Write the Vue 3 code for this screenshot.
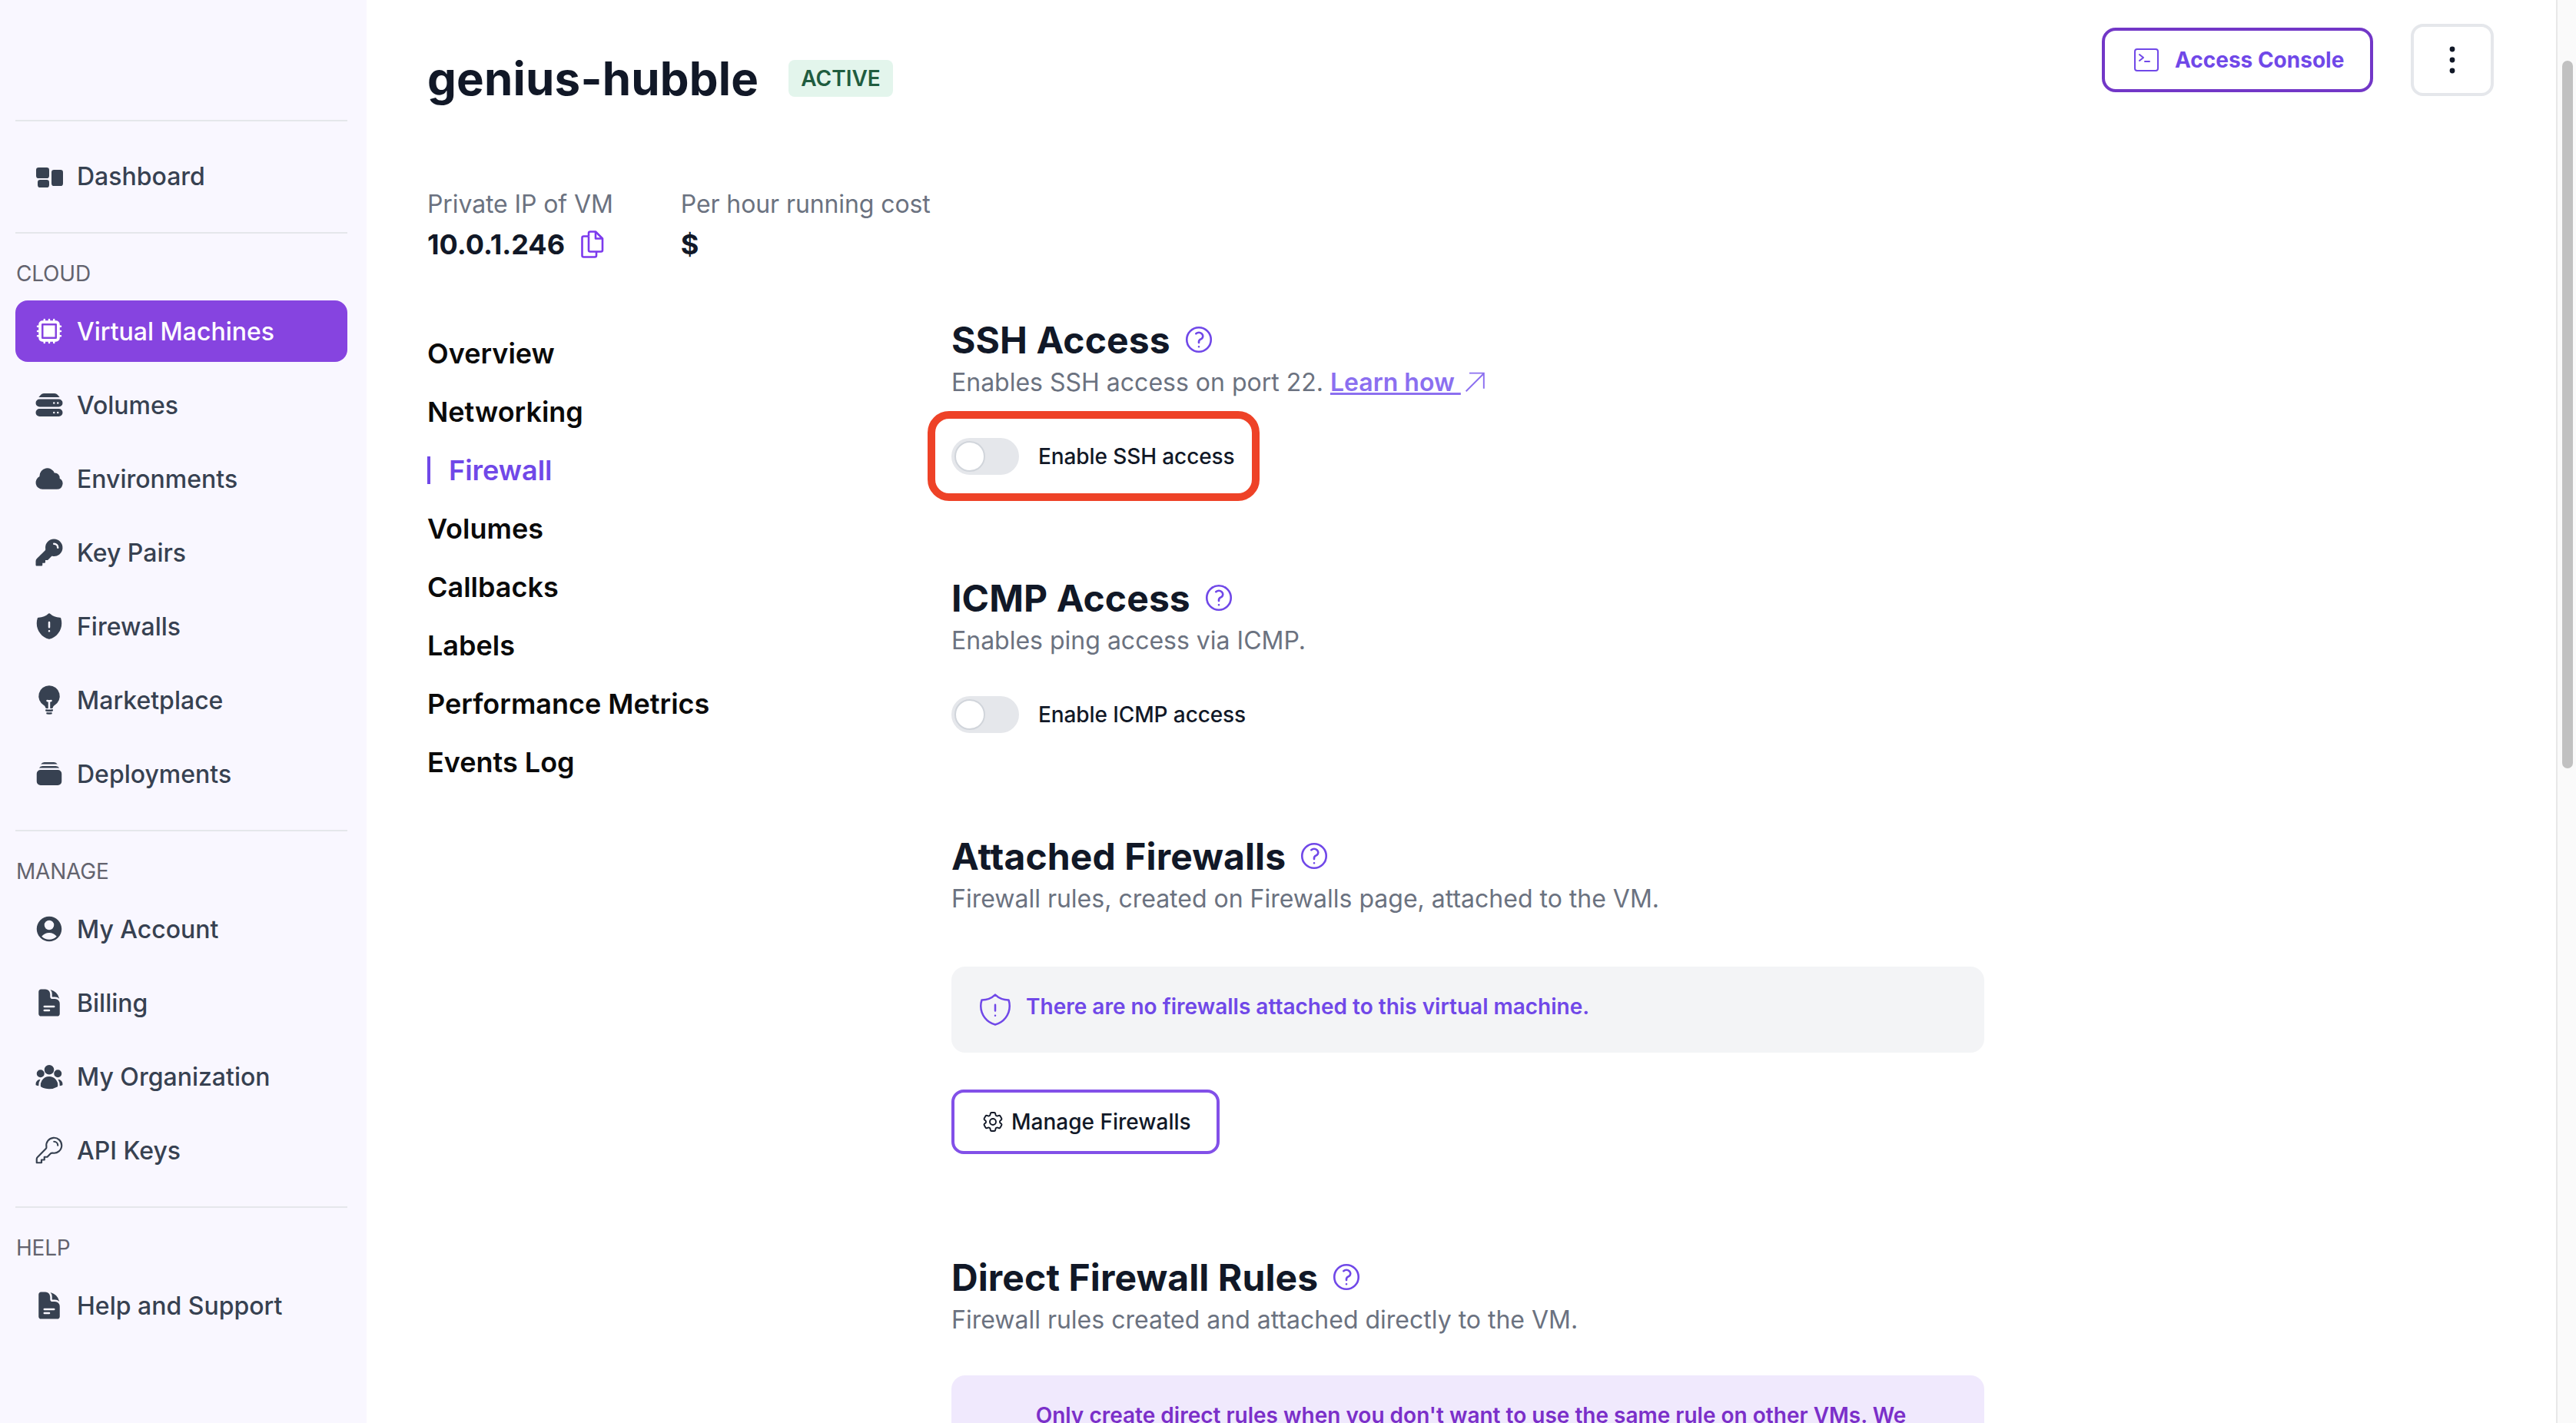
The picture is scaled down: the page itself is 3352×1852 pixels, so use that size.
<script setup>
const groups = [
  { label: null, items: [{ name: 'Dashboard', icon: 'dash' }] },
  {
    label: 'CLOUD',
    items: [
      { name: 'Virtual Machines', icon: 'cpu', active: true },
      { name: 'Volumes', icon: 'server' },
      { name: 'Environments', icon: 'cloud' },
      { name: 'Key Pairs', icon: 'keySolid' },
      { name: 'Firewalls', icon: 'shield' },
      { name: 'Marketplace', icon: 'bulb' },
      { name: 'Deployments', icon: 'stack' }
    ]
  },
  {
    label: 'MANAGE',
    items: [
      { name: 'My Account', icon: 'user' },
      { name: 'Billing', icon: 'doc' },
      { name: 'My Organization', icon: 'team' },
      { name: 'API Keys', icon: 'keyLine' }
    ]
  },
  { label: 'HELP', items: [{ name: 'Help and Support', icon: 'doc' }] }
]
const subNav = ['Overview', 'Networking', 'Firewall', 'Volumes', 'Callbacks', 'Labels', 'Performance Metrics', 'Events Log']
const solid = {
  cloud: ['M4.5 9.75a6 6 0 0 1 11.573-2.226 3.75 3.75 0 0 1 4.133 4.303A4.5 4.5 0 0 1 18 20.25H6.75a5.25 5.25 0 0 1-2.23-10.004 6.072 6.072 0 0 1-.02-.496Z'],
  keySolid: ['M15.75 1.5a6.75 6.75 0 0 0-6.651 7.906c.067.39-.032.717-.221.906l-6.5 6.499a3 3 0 0 0-.878 2.121v2.818c0 .414.336.75.75.75H6a.75.75 0 0 0 .75-.75v-1.5h1.5A.75.75 0 0 0 9 19.5V18h1.5a.75.75 0 0 0 .53-.22l2.658-2.658c.19-.189.517-.288.906-.22A6.75 6.75 0 1 0 15.75 1.5Zm0 3a.75.75 0 0 0 0 1.5A2.25 2.25 0 0 1 18 8.25a.75.75 0 0 0 1.5 0 3.75 3.75 0 0 0-3.75-3.75Z'],
  shield: ['M11.484 2.17a.75.75 0 0 1 1.032 0 11.209 11.209 0 0 0 7.877 3.08.75.75 0 0 1 .722.515 12.74 12.74 0 0 1 .635 3.985c0 5.942-4.064 10.933-9.563 12.348a.749.749 0 0 1-.374 0C6.314 20.683 2.25 15.692 2.25 9.75c0-1.39.223-2.73.635-3.985a.75.75 0 0 1 .722-.516l.143.001c2.996 0 5.718-1.17 7.734-3.08ZM12 8.25a.75.75 0 0 1 .75.75v3.75a.75.75 0 0 1-1.5 0V9a.75.75 0 0 1 .75-.75ZM12 15a.75.75 0 0 0-.75.75v.008c0 .414.336.75.75.75h.008a.75.75 0 0 0 .75-.75v-.008a.75.75 0 0 0-.75-.75H12Z'],
  bulb: ['M12 .75a8.25 8.25 0 0 0-4.135 15.39c.686.398 1.115 1.008 1.134 1.623a.75.75 0 0 0 .577.706c.352.083.71.148 1.074.195.323.041.6-.218.6-.544v-4.661a6.714 6.714 0 0 1-.937-.171.75.75 0 1 1 .374-1.453 5.261 5.261 0 0 0 2.626 0 .75.75 0 1 1 .374 1.452 6.712 6.712 0 0 1-.937.172v4.66c0 .327.277.586.6.545.364-.047.722-.112 1.074-.195a.75.75 0 0 0 .577-.706c.02-.615.448-1.225 1.134-1.623A8.25 8.25 0 0 0 12 .75Z', 'M9.013 19.9a.75.75 0 0 1 .877-.597 11.319 11.319 0 0 0 4.22 0 .75.75 0 1 1 .28 1.473 12.819 12.819 0 0 1-4.78 0 .75.75 0 0 1-.597-.876ZM9.754 22.344a.75.75 0 0 1 .824-.668 13.682 13.682 0 0 0 2.844 0 .75.75 0 1 1 .156 1.492 15.156 15.156 0 0 1-3.156 0 .75.75 0 0 1-.668-.824Z'],
  stack: ['M5.566 4.657A4.505 4.505 0 0 1 6.75 4.5h10.5c.41 0 .806.055 1.183.157A3 3 0 0 0 15.75 3h-7.5a3 3 0 0 0-2.684 1.657ZM2.25 12a3 3 0 0 1 3-3h13.5a3 3 0 0 1 3 3v6a3 3 0 0 1-3 3H5.25a3 3 0 0 1-3-3v-6ZM5.25 7.5c-.41 0-.806.055-1.184.157A3 3 0 0 1 6.75 6h10.5a3 3 0 0 1 2.683 1.657A4.505 4.505 0 0 0 18.75 7.5H5.25Z'],
  user: ['M18.685 19.097A9.723 9.723 0 0 0 21.75 12c0-5.385-4.365-9.75-9.75-9.75S2.25 6.615 2.25 12a9.723 9.723 0 0 0 3.065 7.097A9.716 9.716 0 0 0 12 21.75a9.716 9.716 0 0 0 6.685-2.653Zm-12.54-1.285A7.486 7.486 0 0 1 12 15a7.486 7.486 0 0 1 5.855 2.812A8.224 8.224 0 0 1 12 20.25a8.224 8.224 0 0 1-5.855-2.438ZM15.75 9a3.75 3.75 0 1 1-7.5 0 3.75 3.75 0 0 1 7.5 0Z'],
  doc: ['M5.625 1.5c-1.036 0-1.875.84-1.875 1.875v17.25c0 1.035.84 1.875 1.875 1.875h12.75c1.035 0 1.875-.84 1.875-1.875V12.75A3.75 3.75 0 0 0 16.5 9h-1.875a1.875 1.875 0 0 1-1.875-1.875V5.25A3.75 3.75 0 0 0 9 1.5H5.625ZM7.5 15a.75.75 0 0 1 .75-.75h7.5a.75.75 0 0 1 0 1.5h-7.5A.75.75 0 0 1 7.5 15Zm.75 2.25a.75.75 0 0 0 0 1.5H12a.75.75 0 0 0 0-1.5H8.25Z', 'M12.971 1.816A5.23 5.23 0 0 1 14.25 5.25v1.875c0 .207.168.375.375.375H16.5a5.23 5.23 0 0 1 3.434 1.279 9.768 9.768 0 0 0-6.963-6.963Z'],
  team: ['M8.25 6.75a3.75 3.75 0 1 1 7.5 0 3.75 3.75 0 0 1-7.5 0ZM15.75 9.75a3 3 0 1 1 6 0 3 3 0 0 1-6 0ZM2.25 9.75a3 3 0 1 1 6 0 3 3 0 0 1-6 0ZM6.31 15.117A6.745 6.745 0 0 1 12 12a6.745 6.745 0 0 1 6.709 7.498.75.75 0 0 1-.372.568A12.696 12.696 0 0 1 12 21.75c-2.305 0-4.47-.612-6.337-1.684a.75.75 0 0 1-.372-.568 6.787 6.787 0 0 1 1.019-4.38Z', 'M5.082 14.254a8.287 8.287 0 0 0-1.308 5.135 9.687 9.687 0 0 1-1.764-.44l-.115-.04a.563.563 0 0 1-.373-.487l-.01-.121a3.75 3.75 0 0 1 3.57-4.047ZM20.226 19.389a8.287 8.287 0 0 0-1.308-5.135 3.75 3.75 0 0 1 3.57 4.047l-.01.121a.563.563 0 0 1-.373.486l-.115.04c-.567.2-1.156.349-1.764.441Z'],
  server: ['M5.507 4.048A3 3 0 0 1 7.785 3h8.43a3 3 0 0 1 2.278 1.048l1.722 2.008A4.533 4.533 0 0 0 19.5 6h-15c-.243 0-.482.02-.715.056l1.722-2.008Z', 'M1.5 10.5a3 3 0 0 1 3-3h15a3 3 0 1 1 0 6h-15a3 3 0 0 1-3-3Zm15 0a.75.75 0 1 1-1.5 0 .75.75 0 0 1 1.5 0Zm2.25.75a.75.75 0 1 0 0-1.5.75.75 0 0 0 0 1.5ZM4.5 15a3 3 0 1 0 0 6h15a3 3 0 1 0 0-6h-15Zm11.25 3.75a.75.75 0 1 0 0-1.5.75.75 0 0 0 0 1.5ZM19.5 18a.75.75 0 1 1-1.5 0 .75.75 0 0 1 1.5 0Z'],
  cpu: ['M16.5 7.5h-9v9h9v-9Z', 'M8.25 2.25A.75.75 0 0 1 9 3v.75h2.25V3a.75.75 0 0 1 1.5 0v.75H15V3a.75.75 0 0 1 1.5 0v.75h.75a3 3 0 0 1 3 3v.75H21A.75.75 0 0 1 21 9h-.75v2.25H21a.75.75 0 0 1 0 1.5h-.75V15H21a.75.75 0 0 1 0 1.5h-.75v.75a3 3 0 0 1-3 3h-.75V21a.75.75 0 0 1-1.5 0v-.75h-2.25V21a.75.75 0 0 1-1.5 0v-.75H9V21a.75.75 0 0 1-1.5 0v-.75h-.75a3 3 0 0 1-3-3v-.75H3A.75.75 0 0 1 3 15h.75v-2.25H3a.75.75 0 0 1 0-1.5h.75V9H3a.75.75 0 0 1 0-1.5h.75v-.75a3 3 0 0 1 3-3h.75V3a.75.75 0 0 1 .75-.75ZM6 6.75A.75.75 0 0 1 6.75 6h10.5a.75.75 0 0 1 .75.75v10.5a.75.75 0 0 1-.75.75H6.75a.75.75 0 0 1-.75-.75V6.75Z']
}
const helpPath = 'M9.879 7.519c1.171-1.025 3.071-1.025 4.242 0 1.172 1.025 1.172 2.687 0 3.712-.203.179-.43.326-.67.442-.745.361-1.45.999-1.45 1.827v.75M21 12a9 9 0 1 1-18 0 9 9 0 0 1 18 0Zm-9 5.25h.008v.008H12v-.008Z'
</script>

<template>
  <div class="app">
    <aside class="sidebar">
      <div class="logo-space"></div>
      <section v-for="(group, gi) in groups" :key="gi" class="group">
        <div class="divider"></div>
        <div v-if="group.label" class="group-label">{{ group.label }}</div>
        <div class="items" :class="{ 'items-plain': !group.label }">
          <a v-for="item in group.items" :key="item.name" class="item" :class="{ active: item.active }">
            <svg class="nav-icon" viewBox="0 0 24 24" fill="currentColor">
              <template v-if="item.icon === 'dash'">
                <rect x="1.8" y="5.4" width="10.2" height="8.4" rx="2" />
                <rect x="3" y="15" width="9" height="6" rx="2" />
                <rect x="13.8" y="7.2" width="9" height="12.6" rx="2" />
              </template>
              <path v-else-if="item.icon === 'keyLine'" d="M15.75 5.25a3 3 0 0 1 3 3m3 0a6 6 0 0 1-7.029 5.912c-.563-.097-1.159.026-1.563.43L10.5 17.25H8.25v2.25H6v2.25H2.25v-2.818c0-.597.237-1.17.659-1.591l6.499-6.499c.404-.404.527-1 .43-1.563A6 6 0 1 1 21.75 8.25Z" fill="none" stroke="currentColor" stroke-width="1.3" stroke-linecap="round" stroke-linejoin="round" />
              <path v-else v-for="(d, i) in solid[item.icon]" :key="i" :d="d" fill-rule="evenodd" clip-rule="evenodd" />
            </svg>
            <span>{{ item.name }}</span>
          </a>
        </div>
      </section>
    </aside>

    <main class="main">
      <header class="page-head">
        <div class="head-left">
          <div class="title-row">
            <h1>genius-hubble</h1>
            <span class="badge">ACTIVE</span>
          </div>
          <div class="stats">
            <div>
              <div class="stat-label">Private IP of VM</div>
              <div class="stat-value">
                10.0.1.246
                <svg class="copy" viewBox="0 0 30 36" fill="none" stroke="#7c3aed" stroke-width="2.6" stroke-linejoin="round">
                  <path d="M10 7.5V3.5a2 2 0 0 1 2-2h7l9 9v15a2 2 0 0 1-2 2h-6" />
                  <path d="M19 1.5v9h9" />
                  <path d="M10 7.5H3.5a2 2 0 0 0-2 2v23a2 2 0 0 0 2 2H18a2 2 0 0 0 2-2v-5" />
                  <path d="M10 7.5v18a2 2 0 0 0 2 2h8" />
                </svg>
              </div>
            </div>
            <div>
              <div class="stat-label">Per hour running cost</div>
              <div class="stat-value">$</div>
            </div>
          </div>
        </div>
        <div class="actions">
          <button class="console-btn">
            <svg viewBox="0 0 32 32" width="32" height="32" fill="none" stroke="#7048e8" stroke-width="2" stroke-linecap="round" stroke-linejoin="round">
              <rect x="1" y="2" width="30" height="28" rx="3" />
              <path d="M7 9l5 4-5 4M14 18h6" />
            </svg>
            Access Console
          </button>
          <button class="kebab" aria-label="More">
            <svg viewBox="0 0 8 36" width="8" height="36" fill="#111827">
              <circle cx="4" cy="4" r="3.4" /><circle cx="4" cy="18" r="3.4" /><circle cx="4" cy="32" r="3.4" />
            </svg>
          </button>
        </div>
      </header>

      <div class="columns">
        <nav class="subnav">
          <a v-for="n in subNav" :key="n" :class="{ current: n === 'Firewall' }">{{ n }}</a>
        </nav>

        <div class="content">
          <section class="block">
            <h2>SSH Access
              <svg class="help" viewBox="0 0 24 24" fill="none" stroke="#7048e8" stroke-width="1.5" stroke-linecap="round" stroke-linejoin="round"><path :d="helpPath" /></svg>
            </h2>
            <p class="desc">Enables SSH access on port 22. <a class="learn">Learn how </a>
              <svg class="arrow" viewBox="0 0 32 32" fill="none" stroke="#8b6ff0" stroke-width="2.2"><path d="M3 30L29 4M8 3h21.5v23" /></svg>
            </p>
            <div class="toggle-row marked">
              <span class="toggle"><span class="knob"></span></span>
              <span class="toggle-label">Enable SSH access</span>
            </div>
          </section>

          <section class="block">
            <h2>ICMP Access
              <svg class="help" viewBox="0 0 24 24" fill="none" stroke="#7048e8" stroke-width="1.5" stroke-linecap="round" stroke-linejoin="round"><path :d="helpPath" /></svg>
            </h2>
            <p class="desc">Enables ping access via ICMP.</p>
            <div class="toggle-row">
              <span class="toggle"><span class="knob"></span></span>
              <span class="toggle-label">Enable ICMP access</span>
            </div>
          </section>

          <section class="block">
            <h2>Attached Firewalls
              <svg class="help" viewBox="0 0 24 24" fill="none" stroke="#7048e8" stroke-width="1.5" stroke-linecap="round" stroke-linejoin="round"><path :d="helpPath" /></svg>
            </h2>
            <p class="desc">Firewall rules, created on Firewalls page, attached to the VM.</p>
            <div class="notice">
              <svg viewBox="0 0 24 24" width="50" height="50" fill="none" stroke="#7048e8" stroke-width="1.2" stroke-linecap="round" stroke-linejoin="round">
                <path d="M12 9v3.75m0-10.036A11.959 11.959 0 0 1 3.598 6 11.99 11.99 0 0 0 3 9.75c0 5.592 3.824 10.29 9 11.622 5.176-1.332 9-6.03 9-11.622 0-1.31-.21-2.571-.598-3.751h-.152c-3.196 0-6.1-1.25-8.25-3.286Zm0 13.036h.008v.008H12v-.008Z" />
              </svg>
              <span class="notice-text">There are no firewalls attached to this virtual machine.</span>
            </div>
            <button class="manage-btn">
              <svg viewBox="0 0 24 24" width="32" height="32" fill="none" stroke="#111827" stroke-width="1.4" stroke-linecap="round" stroke-linejoin="round">
                <path d="M9.594 3.94c.09-.542.56-.94 1.11-.94h2.593c.55 0 1.02.398 1.11.94l.213 1.281c.063.374.313.686.645.87.074.04.147.083.22.127.325.196.72.257 1.075.124l1.217-.456a1.125 1.125 0 0 1 1.37.49l1.296 2.247a1.125 1.125 0 0 1-.26 1.431l-1.003.827c-.293.241-.438.613-.43.992a7.723 7.723 0 0 1 0 .255c-.008.378.137.75.43.991l1.004.827c.424.35.534.955.26 1.43l-1.298 2.247a1.125 1.125 0 0 1-1.369.491l-1.217-.456c-.355-.133-.75-.072-1.076.124a6.47 6.47 0 0 1-.22.128c-.331.183-.581.495-.644.869l-.213 1.281c-.09.543-.56.94-1.11.94h-2.594c-.55 0-1.019-.398-1.11-.94l-.213-1.281c-.062-.374-.312-.686-.644-.87a6.52 6.52 0 0 1-.22-.127c-.325-.196-.72-.257-1.076-.124l-1.217.456a1.125 1.125 0 0 1-1.369-.49l-1.297-2.247a1.125 1.125 0 0 1 .26-1.431l1.004-.827c.292-.24.437-.613.43-.991a6.932 6.932 0 0 1 0-.255c.007-.38-.138-.751-.43-.992l-1.004-.827a1.125 1.125 0 0 1-.26-1.43l1.297-2.247a1.125 1.125 0 0 1 1.37-.491l1.216.456c.356.133.751.072 1.076-.124.072-.044.146-.086.22-.128.332-.183.582-.495.644-.869l.214-1.28Z" />
                <path d="M15 12a3 3 0 1 1-6 0 3 3 0 0 1 6 0Z" />
              </svg>
              Manage Firewalls
            </button>
          </section>

          <section class="block">
            <h2>Direct Firewall Rules
              <svg class="help" viewBox="0 0 24 24" fill="none" stroke="#7048e8" stroke-width="1.5" stroke-linecap="round" stroke-linejoin="round"><path :d="helpPath" /></svg>
            </h2>
            <p class="desc">Firewall rules created and attached directly to the VM.</p>
            <div class="direct-note">Only create direct rules when you don't want to use the same rule on other VMs. We</div>
          </section>
        </div>
      </div>
    </main>

    <div class="scrollbar"><div class="thumb"></div></div>
  </div>
</template>

<style scoped>
.app {
  display: flex;
  height: 1852px;
  overflow: hidden;
  background: #fff;
  color: #111827;
  font-family: Inter, "Noto Sans", sans-serif;
}
.sidebar {
  flex: 0 0 477px;
  box-sizing: border-box;
  padding: 0 25px 0 20px;
  background: #f9f7ff;
}
.logo-space { height: 156px; }
.divider { height: 2px; background: #e5e7eb; }
.group + .group { margin-top: 33px; }
.group-label {
  margin: 32px 0 15px 1px;
  height: 40px;
  line-height: 40px;
  font-size: 28px;
  letter-spacing: -.2px;
  color: #63636e;
}
.items { display: flex; flex-direction: column; gap: 16px; }
.items-plain { margin-top: 31px; }
.item {
  display: flex;
  align-items: center;
  gap: 16px;
  height: 80px;
  padding-left: 24px;
  border-radius: 16px;
  font-size: 32px;
  font-weight: 500;
  color: #374151;
}
.item.active { background: #8644e0; color: #fff; }
.nav-icon { width: 40px; height: 40px; flex: none; }

.main {
  flex: 1;
  min-width: 0;
  box-sizing: border-box;
  padding: 31px 81px 0 79px;
}
.page-head { display: flex; justify-content: space-between; align-items: flex-start; }
.head-left { padding-top: 35px; }
.title-row { display: flex; align-items: center; gap: 39px; height: 72px; }
h1 { margin: 0; font-size: 60px; line-height: 72px; font-weight: 700; letter-spacing: .2px; color: #111827; }
.badge {
  display: block;
  height: 48px;
  line-height: 48px;
  padding: 0 16px;
  border-radius: 8px;
  background: #e3f5ec;
  color: #1f5c3f;
  font-size: 28px;
  font-weight: 600;
}
.stats { display: flex; gap: 88px; margin-top: 108px; }
.stat-label { font-size: 32px; line-height: 40px; letter-spacing: -.1px; color: #6b7280; }
.stat-value {
  display: flex;
  align-items: center;
  gap: 21px;
  height: 44px;
  margin-top: 10px;
  font-size: 36px;
  font-weight: 700;
  color: #111827;
}
.copy { width: 30px; height: 36px; }
.actions { display: flex; align-items: center; gap: 49px; }
button { font-family: inherit; background: #fff; cursor: pointer; }
.console-btn {
  display: flex;
  align-items: center;
  gap: 21px;
  box-sizing: border-box;
  width: 353px;
  height: 84px;
  padding: 0 0 0 38px;
  border: 4px solid #7237c7;
  border-radius: 18px;
  font-size: 28px;
  font-weight: 700;
  color: #7048e8;
  white-space: nowrap;
}
.kebab {
  display: flex;
  align-items: center;
  justify-content: center;
  box-sizing: border-box;
  width: 108px;
  height: 94px;
  padding: 0;
  border: 4px solid #e5e7eb;
  border-radius: 16px;
}

.columns { display: flex; margin-top: 70px; }
.subnav {
  flex: 0 0 682px;
  display: flex;
  flex-direction: column;
  padding-top: 12px;
}
.subnav a {
  height: 76px;
  line-height: 76px;
  font-size: 36px;
  font-weight: 600;
  color: #0a0a0a;
}
.subnav a.current {
  position: relative;
  padding-left: 28px;
  color: #7048e8;
}
.subnav a.current::before {
  content: "";
  position: absolute;
  left: 0;
  top: 20px;
  width: 4px;
  height: 36px;
  background: #7048e8;
}
.content { width: 1344px; }
.block + .block { margin-top: 128px; }
h2 {
  display: flex;
  align-items: center;
  gap: 16px;
  margin: 0;
  height: 64px;
  font-size: 48px;
  font-weight: 700;
  letter-spacing: .1px;
  color: #111827;
}
.help { width: 42px; height: 42px; flex: none; }
.desc {
  margin: 0;
  height: 48px;
  line-height: 48px;
  font-size: 32px;
  color: #6b7280;
}
.learn { color: #8b6ff0; font-weight: 600; text-decoration: underline; }
.arrow { width: 28px; height: 28px; margin-left: 4px; vertical-align: -2px; }
.toggle-row {
  position: relative;
  display: inline-flex;
  align-items: center;
  gap: 25px;
  height: 48px;
  margin-top: 48px;
  vertical-align: top;
}
.marked::after {
  content: "";
  position: absolute;
  left: -31px;
  right: -32px;
  top: -35px;
  bottom: -34px;
  border: 10px solid #ee4227;
  border-radius: 28px;
}
.toggle {
  display: block;
  box-sizing: border-box;
  width: 88px;
  height: 48px;
  padding: 4px;
  border-radius: 24px;
  background: #e5e7eb;
}
.knob {
  display: block;
  box-sizing: border-box;
  width: 40px;
  height: 40px;
  border-radius: 50%;
  background: #fff;
  border: 2px solid #d1d5db;
}
.toggle-label { font-size: 28px; font-weight: 500; letter-spacing: -.1px; color: #111827; }
.notice {
  display: flex;
  align-items: center;
  gap: 15px;
  box-sizing: border-box;
  height: 112px;
  margin-top: 64px;
  padding-left: 32px;
  border-radius: 18px;
  background: #f3f4f6;
  font-size: 28px;
  font-weight: 600;
  color: #7048e8;
}
.notice-text { margin-bottom: 8px; }
.manage-btn {
  display: flex;
  align-items: center;
  gap: 8px;
  box-sizing: border-box;
  width: 349px;
  height: 84px;
  margin-top: 48px;
  padding: 0 0 0 34px;
  border: 4px solid #8250e8;
  border-radius: 16px;
  font-size: 28px;
  font-weight: 500;
  color: #111827;
}
.direct-note {
  box-sizing: border-box;
  height: 200px;
  margin-top: 48px;
  padding: 32px 0 0 8px;
  border-radius: 18px;
  background: #f0e9fd;
  text-align: center;
  font-size: 28px;
  font-weight: 600;
  line-height: 40px;
  color: #7b2fc9;
}
.scrollbar {
  flex: 0 0 26px;
  box-sizing: border-box;
  border-left: 2px solid #e8e8e8;
  background: #fafafa;
  padding: 79px 4px 0 6px;
}
.thumb { height: 921px; border-radius: 7px; background: #c1c1c1; }
</style>

<style>
html, body { margin: 0; overflow: hidden; background: #fff; }
</style>
